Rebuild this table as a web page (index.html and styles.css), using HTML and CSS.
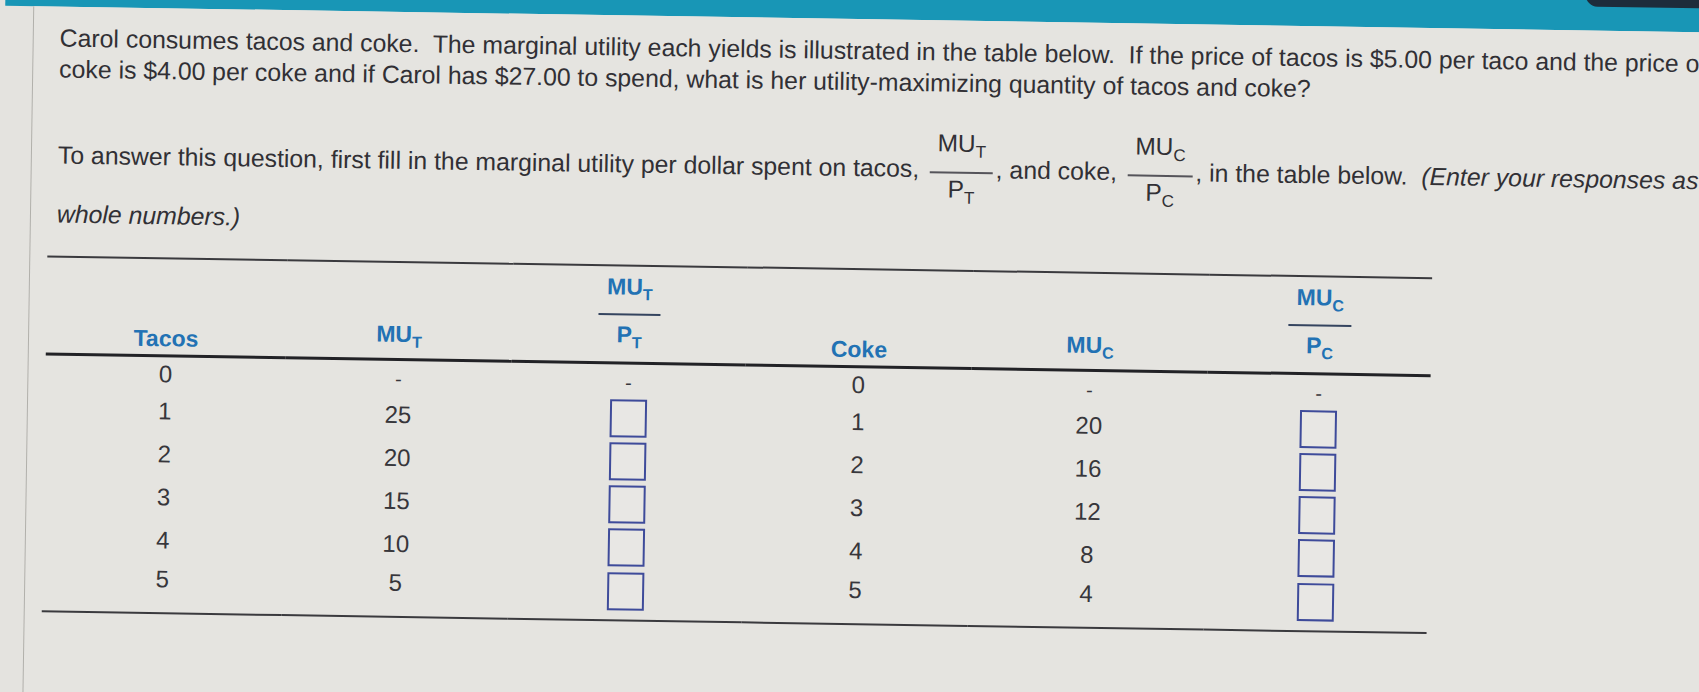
FILE: index.html
```html
<!DOCTYPE html>
<html lang="en">
<head>
<meta charset="utf-8">
<title>Marginal utility per dollar</title>
<link rel="stylesheet" href="styles.css">
</head>
<body>
<div class="sheet">
  <header class="topbar"><div class="topbtn"></div></header>
  <main class="panel">
    <p class="q">Carol consumes tacos and coke.&nbsp; The marginal utility each yields is illustrated in the table below.&nbsp; If the price of tacos is $5.00 per taco and the price of coke is $4.00 per coke and if Carol has $27.00 to spend, what is her utility-maximizing quantity of tacos and coke?</p>
    <p class="q q2">To answer this question, first fill in the marginal utility per dollar spent on tacos, <span class="frac"><span class="num">MU<sub>T</sub></span><span class="den">P<sub>T</sub></span></span>, and coke, <span class="frac"><span class="num">MU<sub>C</sub></span><span class="den">P<sub>C</sub></span></span>, in the table below.&nbsp; <em>(Enter your responses as whole numbers.)</em></p>
    <table class="mu">
      <colgroup>
        <col class="c1"><col class="c2"><col class="c3"><col class="c4"><col class="c5"><col class="c6">
      </colgroup>
      <thead>
        <tr>
          <th>Tacos</th>
          <th>MU<sub>T</sub></th>
          <th><span class="hfrac"><span class="hnum">MU<sub>T</sub></span><span class="hden">P<sub>T</sub></span></span></th>
          <th>Coke</th>
          <th>MU<sub>C</sub></th>
          <th><span class="hfrac"><span class="hnum">MU<sub>C</sub></span><span class="hden">P<sub>C</sub></span></span></th>
        </tr>
      </thead>
      <tbody>
        <tr class="r0"><td>0</td><td><span class="dash">-</span></td><td><span class="dash">-</span></td><td>0</td><td><span class="dash">-</span></td><td><span class="dash">-</span></td></tr>
        <tr><td>1</td><td>25</td><td><span class="box"></span></td><td>1</td><td>20</td><td><span class="box"></span></td></tr>
        <tr><td>2</td><td>20</td><td><span class="box"></span></td><td>2</td><td>16</td><td><span class="box"></span></td></tr>
        <tr><td>3</td><td>15</td><td><span class="box"></span></td><td>3</td><td>12</td><td><span class="box"></span></td></tr>
        <tr><td>4</td><td>10</td><td><span class="box"></span></td><td>4</td><td>8</td><td><span class="box"></span></td></tr>
        <tr class="rlast"><td>5</td><td>5</td><td><span class="box"></span></td><td>5</td><td>4</td><td><span class="box"></span></td></tr>
      </tbody>
    </table>
  </main>
</div>
</body>
</html>
```
FILE: styles.css
```css
html, body {
  margin: 0;
  padding: 0;
  background: #e4e3df;
  overflow: hidden;
  height: 100%;
}
body {
  font-family: "Liberation Sans", Arial, sans-serif;
  color: #313035;
}
.sheet {
  width: 1780px;
  margin-top: -40px;
  transform: rotate(0.9deg);
  transform-origin: 849px 386px;
}
.topbar {
  height: 59px;
  background: #1896b6;
  display: flex;
  justify-content: flex-end;
  align-items: flex-start;
  padding-right: 60px;
}
.topbtn {
  width: 140px;
  height: 30px;
  margin-top: 5px;
  background: #1d2c3b;
  border-radius: 0 0 0 12px;
}
.panel {
  margin-left: 28px;
  border-left: 1px solid #b1b0ab;
  min-height: 760px;
  padding: 16px 0 0 26px;
  background: #e5e4e0;
}
.q {
  margin: 0;
  width: 1680px;
  font-size: 24.8px;
  line-height: 31px;
}
.q2 {
  margin-top: 31px;
}
.q em {
  font-style: italic;
}
.frac {
  display: inline-flex;
  flex-direction: column;
  align-items: stretch;
  vertical-align: middle;
  font-size: 24.5px;
  line-height: 28px;
  margin: 0 3px 0 4px;
  text-align: center;
}
.frac .num {
  padding: 0 7px 6px;
  border-bottom: 2px solid #55545a;
}
.frac .den {
  padding: 2px 7px 1px;
}
sub {
  font-size: 0.7em;
}
.mu {
  margin-top: 26px;
  margin-left: -9px;
  border-collapse: collapse;
  table-layout: fixed;
  width: 1385px;
  border-top: 2px solid #3a3a3e;
  border-bottom: 2px solid #3a3a3e;
}
.c1 { width: 240px; }
.c2 { width: 226px; }
.c3 { width: 234px; }
.c4 { width: 226px; }
.c5 { width: 236px; }
.c6 { width: 223px; }
.mu th {
  font-size: 23px;
  line-height: 28px;
  font-weight: bold;
  color: #2272b4;
  vertical-align: bottom;
  padding: 0 0 2px;
  height: 93px;
  border-bottom: 3px solid #222226;
}
.hfrac {
  display: inline-flex;
  flex-direction: column;
  align-items: stretch;
}
.hnum {
  padding: 0 8px 6px;
  border-bottom: 2px solid #34445f;
}
.hden {
  padding: 5px 8px 3px;
}
.mu td {
  font-size: 24px;
  line-height: 28px;
  text-align: center;
  vertical-align: middle;
  height: 43px;
  padding: 0;
  color: #37363b;
}
.mu .r0 td {
  height: 31px;
  padding-top: 2px;
}
.mu .rlast td {
  height: 47px;
  vertical-align: top;
  padding-top: 3px;
}
.dash {
  font-size: 20px;
}
.box {
  display: inline-block;
  width: 33px;
  height: 34px;
  border: 2px solid #3e4b9a;
  background: #e8e7e4;
  vertical-align: middle;
}
.rlast .box {
  vertical-align: top;
}
```
